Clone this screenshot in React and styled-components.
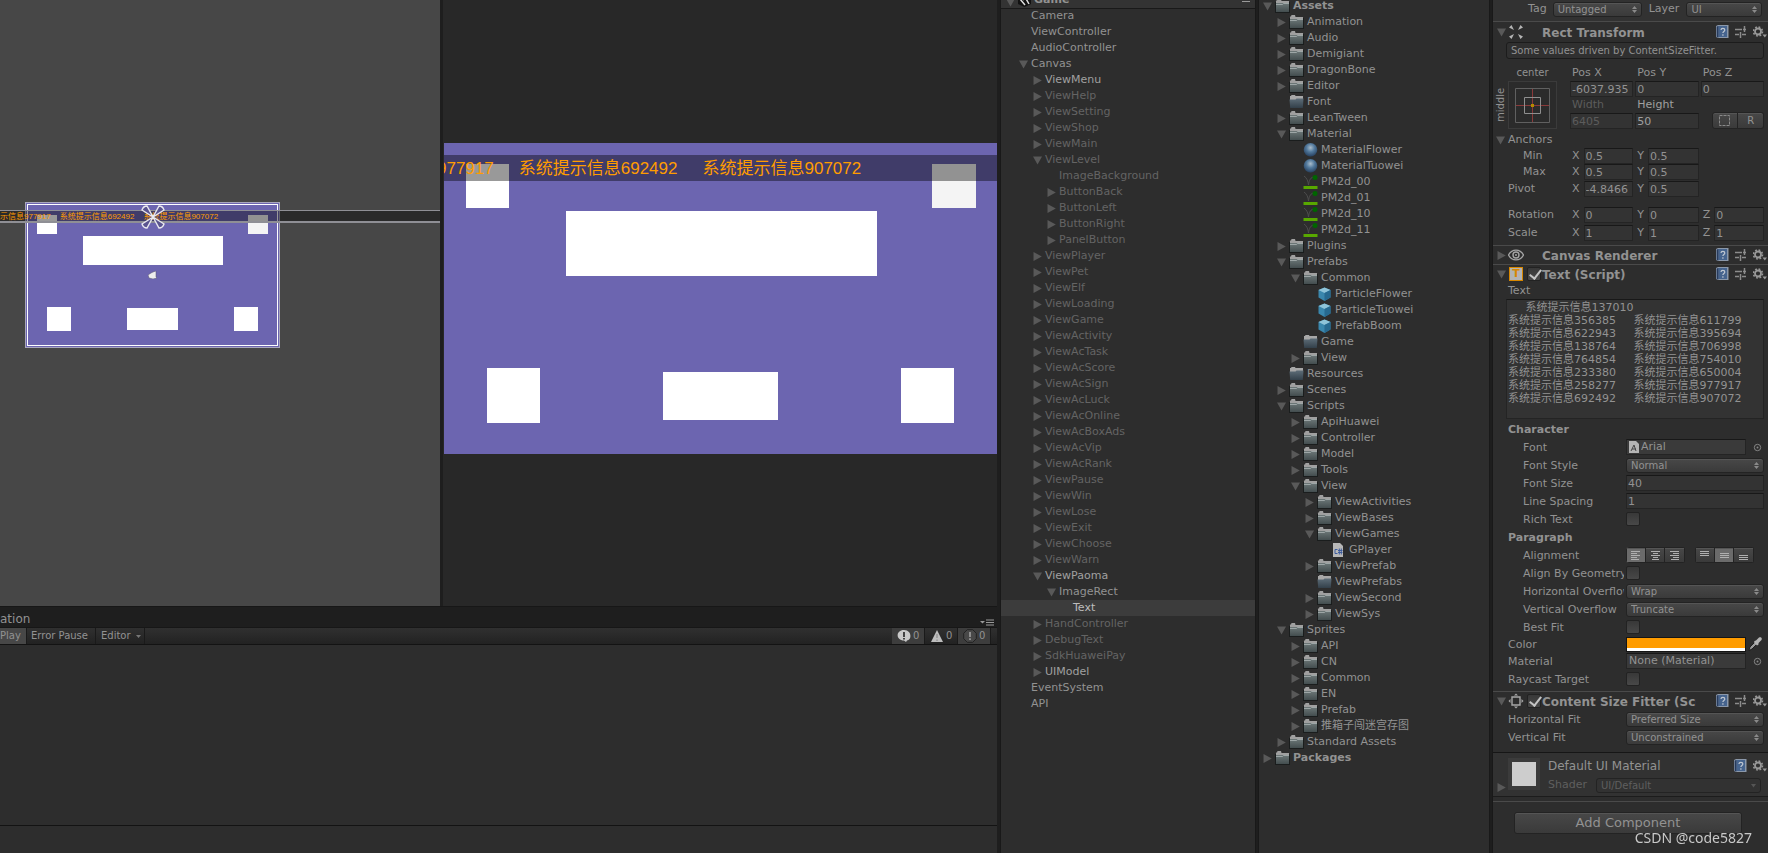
import React from "react";
import styled, { createGlobalStyle, css } from "styled-components";

const GlobalStyle = createGlobalStyle`
  * {
    box-sizing: border-box;
  }
  body {
    margin: 0;
    overflow: hidden;
    background: #202020;
    color: #929292;
    font-family: "DejaVu Sans", "Noto Sans CJK SC", sans-serif;
    font-size: 11px;
    line-height: 16px;
  }
  input, select, textarea, button {
    margin: 0;
    color: inherit;
    font: inherit;
  }
  svg {
    display: block;
    flex: none;
  }
`;

//Data
// [depth, name, arrow, state]
const hierarchy = [
  [0, "Camera"],
  [0, "ViewController"],
  [0, "AudioController"],
  [0, "Canvas", "open"],
  [1, "ViewMenu", "closed", "bright"],
  [1, "ViewHelp", "closed", "off"],
  [1, "ViewSetting", "closed", "off"],
  [1, "ViewShop", "closed", "off"],
  [1, "ViewMain", "closed", "off"],
  [1, "ViewLevel", "open", "off"],
  [2, "ImageBackground", "", "off"],
  [2, "ButtonBack", "closed", "off"],
  [2, "ButtonLeft", "closed", "off"],
  [2, "ButtonRight", "closed", "off"],
  [2, "PanelButton", "closed", "off"],
  [1, "ViewPlayer", "closed", "off"],
  [1, "ViewPet", "closed", "off"],
  [1, "ViewElf", "closed", "off"],
  [1, "ViewLoading", "closed", "off"],
  [1, "ViewGame", "closed", "off"],
  [1, "ViewActivity", "closed", "off"],
  [1, "ViewAcTask", "closed", "off"],
  [1, "ViewAcScore", "closed", "off"],
  [1, "ViewAcSign", "closed", "off"],
  [1, "ViewAcLuck", "closed", "off"],
  [1, "ViewAcOnline", "closed", "off"],
  [1, "ViewAcBoxAds", "closed", "off"],
  [1, "ViewAcVip", "closed", "off"],
  [1, "ViewAcRank", "closed", "off"],
  [1, "ViewPause", "closed", "off"],
  [1, "ViewWin", "closed", "off"],
  [1, "ViewLose", "closed", "off"],
  [1, "ViewExit", "closed", "off"],
  [1, "ViewChoose", "closed", "off"],
  [1, "ViewWarn", "closed", "off"],
  [1, "ViewPaoma", "open", "bright"],
  [2, "ImageRect", "open"],
  [3, "Text", "", "selected"],
  [1, "HandController", "closed", "off"],
  [1, "DebugText", "closed", "off"],
  [1, "SdkHuaweiPay", "closed", "off"],
  [1, "UIModel", "closed", "bright"],
  [0, "EventSystem"],
  [0, "API"],
];

// [depth, name, arrow, icon]
const project = [
  [0, "Assets", "open", "folder", true],
  [1, "Animation", "closed", "folder"],
  [1, "Audio", "closed", "folder"],
  [1, "Demigiant", "closed", "folder"],
  [1, "DragonBone", "closed", "folder"],
  [1, "Editor", "closed", "folder"],
  [1, "Font", "", "empty"],
  [1, "LeanTween", "closed", "folder"],
  [1, "Material", "open", "folder"],
  [2, "MaterialFlower", "", "material"],
  [2, "MaterialTuowei", "", "material"],
  [2, "PM2d_00", "", "physics"],
  [2, "PM2d_01", "", "physics"],
  [2, "PM2d_10", "", "physics"],
  [2, "PM2d_11", "", "physics"],
  [1, "Plugins", "closed", "folder"],
  [1, "Prefabs", "open", "folder"],
  [2, "Common", "open", "folder"],
  [3, "ParticleFlower", "", "prefab"],
  [3, "ParticleTuowei", "", "prefab"],
  [3, "PrefabBoom", "", "prefab"],
  [2, "Game", "", "empty"],
  [2, "View", "closed", "folder"],
  [1, "Resources", "", "empty"],
  [1, "Scenes", "closed", "folder"],
  [1, "Scripts", "open", "folder"],
  [2, "ApiHuawei", "closed", "folder"],
  [2, "Controller", "closed", "folder"],
  [2, "Model", "closed", "folder"],
  [2, "Tools", "closed", "folder"],
  [2, "View", "open", "folder"],
  [3, "ViewActivities", "closed", "folder"],
  [3, "ViewBases", "closed", "folder"],
  [3, "ViewGames", "open", "folder"],
  [4, "GPlayer", "", "script"],
  [3, "ViewPrefab", "closed", "folder"],
  [3, "ViewPrefabs", "", "empty"],
  [3, "ViewSecond", "closed", "folder"],
  [3, "ViewSys", "closed", "folder"],
  [1, "Sprites", "open", "folder"],
  [2, "API", "closed", "folder"],
  [2, "CN", "closed", "folder"],
  [2, "Common", "closed", "folder"],
  [2, "EN", "closed", "folder"],
  [2, "Prefab", "closed", "folder"],
  [2, "推箱子闯迷宫存图", "closed", "folder"],
  [1, "Standard Assets", "closed", "folder"],
  [0, "Packages", "closed", "folder", true],
];

const messages = [
  ["137010"],
  ["356385", "611799"],
  ["622943", "395694"],
  ["138764", "706998"],
  ["764854", "754010"],
  ["233380", "650004"],
  ["258277", "977917"],
  ["692492", "907072"],
];

const messageText = messages
  .map((row) =>
    row.length === 1
      ? "     系统提示信息" + row[0]
      : row.map((n) => "系统提示信息" + n).join("     ")
  )
  .join("\n");

// x, y, width, height in the game picture
const gameBlocks = [
  [22, 21, 43, 44, "#fff"],
  [488, 21, 44, 44, "#f4f4f4"],
  [122, 68, 311, 65, "#fff"],
  [43, 225, 53, 55, "#fff"],
  [219, 229, 115, 48, "#fff"],
  [457, 225, 53, 55, "#fff"],
];

const sceneBlocks = [
  [37, 215, 20, 19, "#fff"],
  [248, 215, 20, 19, "#f4f4f4"],
  [83, 236, 140, 29, "#fff"],
  [47, 307, 24, 24, "#fff"],
  [127, 308, 51, 22, "#fff"],
  [234, 307, 24, 24, "#fff"],
];

//Icons
const Arrow = ({ dir }) => (
  <svg width="9" height="9" viewBox="0 0 9 9" fill="#595959">
    {dir === "open" && <path d="M0 .5h9L4.500 8.500z" />}
    {dir === "closed" && <path d="M.5 0v9L8.800 4.500z" />}
  </svg>
);

const FileIcon = ({ kind }) => (
  <svg width="15" height="15" viewBox="0 0 15 15">
    <defs>
      <linearGradient id="folderFill" x1="0" y1="0" x2="0" y2="1">
        <stop offset="0" stopColor="#6d7878" />
        <stop offset="1" stopColor="#434d4f" />
      </linearGradient>
      <linearGradient id="emptyFill" x1="0" y1="0" x2="0" y2="1">
        <stop offset="0" stopColor="#5d6d78" />
        <stop offset="1" stopColor="#33404a" />
      </linearGradient>
      <radialGradient id="ballFill" cx=".5" cy=".35" r=".6">
        <stop offset="0" stopColor="#a9bccb" />
        <stop offset=".5" stopColor="#52799c" />
        <stop offset="1" stopColor="#2c4766" />
      </radialGradient>
    </defs>
    {kind === "folder" && (
      <>
        <path d="M0 3h15v11H0z" fill="#1a1d1d" />
        <path d="M1 1.500h1L2.500 0H6l.5 2H14v3H1z" fill="#a0a0a0" />
        <path d="M1 4h13v9H1z" fill="url(#folderFill)" />
        <path d="M1 5.500h6.500l1-1H14" fill="none" stroke="#a4adad" strokeWidth=".9" />
      </>
    )}
    {kind === "empty" && (
      <>
        <path d="M1 1h1l.5-1H6l.5 1H14v5H1z" fill="#a8a8a8" />
        <path d="M.5 4.500h6l1-1h7l-.7 9.500H1.200z" fill="url(#emptyFill)" />
      </>
    )}
    {kind === "material" && <circle cx="7.500" cy="6.800" r="6.800" fill="url(#ballFill)" />}
    {kind === "physics" && (
      <>
        <path d="M1 1c3 2 4 5 4.500 9C6 5 8 2 11 2" fill="none" stroke="#4d4d4d" />
        <circle cx="12" cy="2.500" r="2.500" fill="#006400" />
        <path d="M.5 11h14v3H.5z" fill="#58a800" />
      </>
    )}
    {kind === "prefab" && (
      <>
        <path d="M7.500 .5l6 2.500v7.500l-6 3.500-6-3.500V3z" fill="#3a87ad" />
        <path d="M7.500 .5l6 2.500-6 3-6-3z" fill="#8fc4d9" />
        <path d="M7.500 6l6-3v7.500l-6 3.500z" fill="#27698f" />
      </>
    )}
    {kind === "script" && (
      <>
        <path d="M2 0h7l3 3v11H2z" fill="#b7b7b7" />
        <path d="M6.500 6.500H4v4h2.500M8.300 5.500v6M10.300 5.500v6M7 7.500h4.500M7 9.500h4.500" fill="none" stroke="#3d5c9e" />
      </>
    )}
  </svg>
);

const BookIcon = () => (
  <svg width="13" height="14" viewBox="0 0 13 14">
    <path d="M0 1l2-1h10.500v13H2L0 12z" fill="#8b98aa" />
    <path d="M2.500 1h8.500v11H2.500z" fill="#46648e" />
    <path d="M.7 1.500L2.500 1v11.500L.7 12z" fill="#263b5e" />
    <path d="M5 5c0-2.200 3.800-2.200 3.800 0 0 1.500-1.900 1.400-1.900 3M6.900 9.200v1.500" fill="none" stroke="#c0c8d2" strokeWidth="1.200" />
  </svg>
);

const SlidersIcon = () => (
  <svg width="12" height="12" viewBox="0 0 12 12" fill="none" stroke="#8c8c8c" strokeWidth="1.500">
    <path d="M0 3.500h7M9.500 0v6M8 3.500h3M0 8.500h4M7 8.500h4M5.500 6v6" />
  </svg>
);

const GearIcon = () => (
  <svg width="14" height="12" viewBox="0 0 14 12">
    <circle cx="5" cy="5.500" r="3" fill="none" stroke="#989898" strokeWidth="1.800" />
    <circle cx="5" cy="5.500" r="4.500" fill="none" stroke="#989898" strokeWidth="1.600" strokeDasharray="1.770 1.770" />
    <path d="M9.500 8.500H14l-2.200 3z" fill="#989898" />
  </svg>
);

const RectIcon = () => (
  <svg width="16" height="16" viewBox="0 0 16 16" fill="#b5b5b5">
    <path d="M1 3.500L3.500 1 6 6zM15 3.500L12.500 1 10 6zM1 12.500L3.500 15 6 10zM15 12.500L12.500 15 10 10z" />
  </svg>
);

const EyeIcon = () => (
  <svg width="16" height="16" viewBox="0 0 16 16" fill="none" stroke="#a5a5a5" strokeWidth="1.400">
    <path d="M.5 8C4 1.500 12 1.500 15.500 8 12 14.500 4 14.500 .5 8z" />
    <circle cx="8" cy="8" r="3" />
    <circle cx="8" cy="8" r="1" fill="#a5a5a5" stroke="none" />
  </svg>
);

const FitterIcon = () => (
  <svg width="16" height="16" viewBox="0 0 16 16">
    <path d="M4 4h8v8H4z" fill="none" stroke="#a8a8a8" strokeWidth="1.400" />
    <path d="M6 2.500L8 .5l2 2zM6 13.500l2 2 2-2zM2.500 6l-2 2 2 2zM13.500 6l2 2-2 2z" fill="#a8a8a8" />
  </svg>
);

const PickerIcon = () => (
  <svg width="9" height="9" viewBox="0 0 9 9">
    <circle cx="4.500" cy="4.500" r="3.200" fill="none" stroke="#858585" />
    <circle cx="4.500" cy="4.500" r="1" fill="#858585" />
  </svg>
);

const DropperIcon = () => (
  <svg width="14" height="14" viewBox="0 0 14 14">
    <path d="M1 13.500l1-3.500 5-5 2 2-5 5z" fill="#9a9a9a" stroke="#111" strokeWidth=".8" />
    <path d="M6.500 4l1.500-.5L11 .6c2-1 3.500.5 2.500 2.400L10.500 6v1.500L9 8.500 6 5.300z" fill="#b5b5b5" />
  </svg>
);

const AlignIcon = ({ lines }) => (
  <svg width="11" height="11" viewBox="0 0 11 11" stroke="#b0b0b0">
    {lines.map(([x1, x2, y]) => (
      <path key={y} d={`M${x1} ${y}H${x2}`} />
    ))}
  </svg>
);

const MenuIcon = () => (
  <svg width="14" height="7" viewBox="0 0 14 7">
    <path d="M0 2h5L2.500 4.500z" fill="#999" />
    <path d="M6 1h8M6 3.500h8M6 6h8" stroke="#999" />
  </svg>
);

//Inspector pieces
const ComponentHeader = ({ name, icon, open, toggle, tall }) => (
  <Header $tall={tall}>
    <Arrow dir={open ? "open" : "closed"} />
    <HeaderIcon>{icon}</HeaderIcon>
    <HeaderToggle>
      {toggle && <Check type="checkbox" defaultChecked aria-label={"Enable " + name} />}
    </HeaderToggle>
    <HeaderName>{name}</HeaderName>
    <HeaderTools>
      <BookIcon />
      <SlidersIcon />
      <GearIcon />
    </HeaderTools>
  </Header>
);

const Field = ({ id, label, indent, short, children }) => (
  <FieldRow $short={short}>
    <FieldLabel htmlFor={id} $indent={indent}>
      {label}
    </FieldLabel>
    <FieldValue>{children}</FieldValue>
  </FieldRow>
);

const Popup = ({ id, value, dim, small, label }) => (
  <PopupBox $dim={dim}>
    <Select id={id} defaultValue={value} disabled={dim} aria-label={label}>
      <option>{value}</option>
    </Select>
    <svg width="5" height="7" viewBox="0 0 5 7" fill={dim ? "#555" : "#8a8a8a"}>
      {small ? <path d="M0 2h5L2.500 5.500z" /> : <path d="M0 3L2.500 0 5 3zM0 4l2.500 3L5 4z" />}
    </svg>
  </PopupBox>
);

const Vector = ({ label, values, indent, tall, gap }) => (
  <VectorRow $tall={tall} $gap={gap}>
    <VectorLabel $indent={indent}>{label}</VectorLabel>
    <Triple>
      {values.map((v, i) => (
        <Axis key={i}>
          {"XYZ"[i]}
          <TextInput defaultValue={v} />
        </Axis>
      ))}
    </Triple>
  </VectorRow>
);

export default function App() {
  return (
    <>
      <GlobalStyle />
      <Editor>
        <LeftSide>
          <Views>
            <SceneView>
              <SceneCanvas />
              {sceneBlocks.map(([x, y, w, h, color]) => (
                <Block key={x + "-" + y} $x={x} $y={y} $w={w} $h={h} $color={color} />
              ))}
              <SceneStrip>
                <span>系统提示信息977917</span>
                <span>系统提示信息692492</span>
                <span>系统提示信息907072</span>
              </SceneStrip>
              <AnchorGizmo width="24" height="24" viewBox="0 0 24 24">
                <path
                  d="M12 12L1 5c1-3 3-4 5-4zM12 12l11-7c-1-3-3-4-5-4zM12 12L1 19c1 3 3 4 5 4zM12 12l11 7c-1 3-3 4-5 4z"
                  fill="#5b5590"
                  stroke="#e8e8ef"
                  strokeWidth="1.400"
                />
              </AnchorGizmo>
              <SpeakerGizmo width="10" height="8" viewBox="0 0 10 8">
                <path d="M0 4l3-2 2-1 3-1v6l1 1-4 1-4-1z" fill="#eeeeee" stroke="#55506f" strokeWidth=".5" />
              </SpeakerGizmo>
            </SceneView>
            <GameView>
              <GamePicture>
                {gameBlocks.map(([x, y, w, h, color]) => (
                  <Block key={x + "-" + y} $x={x} $y={y} $w={w} $h={h} $color={color} />
                ))}
                <GameStrip>
                  <span>系统提示信息977917</span>
                  <span>系统提示信息692492</span>
                  <span>系统提示信息907072</span>
                </GameStrip>
              </GamePicture>
            </GameView>
          </Views>

          <Console>
            <ConsoleTabs>
              <span>ation</span>
              <MenuIcon />
            </ConsoleTabs>
            <Toolbar>
              <ToolButton $first $on>Play</ToolButton>
              <ToolButton>Error Pause</ToolButton>
              <ToolButton $wide>
                Editor
                <svg width="5" height="3" viewBox="0 0 5 3" fill="#777">
                  <path d="M0 0h5L2.500 3z" />
                </svg>
              </ToolButton>
              <Counters>
                <Counter $on>
                  <svg width="14" height="14" viewBox="0 0 14 14">
                    <path d="M7 1c8 0 8 10 3 10.500L9 13l-2-1.500C-1.500 11.500-1.500 1 7 1z" fill="#c9c9c9" />
                    <path d="M7 3v5M7 9v1.500" stroke="#333" strokeWidth="1.800" />
                  </svg>
                  0
                </Counter>
                <Counter>
                  <svg width="14" height="14" viewBox="0 0 14 14">
                    <path d="M7 1l6 12H1z" fill="#bdbdbd" />
                    <path d="M7 5v4M7 10.500V12" stroke="#8b8b8b" strokeWidth="1.200" />
                  </svg>
                  0
                </Counter>
                <Counter $on>
                  <svg width="14" height="14" viewBox="0 0 14 14">
                    <path d="M4.300 .7h5.400L13.300 4.300v5.400L9.700 13.300H4.300L.7 9.700V4.300z" fill="#484848" stroke="#222" />
                    <path d="M7 3v5M7 9.300V11" stroke="#a5a5a5" strokeWidth="1.500" />
                  </svg>
                  0
                </Counter>
              </Counters>
            </Toolbar>
            <Log />
            <LogDetail />
          </Console>
        </LeftSide>

        <Panel>
          <SceneHeader>
            <Arrow dir="open" />
            <svg width="13" height="13" viewBox="0 0 13 13">
              <path d="M6.500 0L13 4v6l-6.500 3L0 10V4z" fill="#111" />
              <path d="M2 5l5 6M7 3l4 7M3 3l3 3" stroke="#ddd" strokeWidth="1.500" />
            </svg>
            <b>Game</b>
            <svg width="14" height="12" viewBox="0 0 14 12">
              <path d="M6 1h8M6 3.500h8M6 6.500h8" stroke="#999" />
            </svg>
          </SceneHeader>
          <Tree>
            {hierarchy.map(([depth, name, arrow, state]) => (
              <TreeRow key={name} $depth={depth} $start={18} $state={state}>
                <Arrow dir={arrow} />
                <span>{name}</span>
              </TreeRow>
            ))}
          </Tree>
        </Panel>

        <Panel>
          <Tree $scrolled>
            {project.map(([depth, name, arrow, icon, bold], i) => (
              <TreeRow key={i} $depth={depth} $start={4} $bold={bold}>
                <Arrow dir={arrow} />
                <FileIcon kind={icon} />
                <span>{name}</span>
              </TreeRow>
            ))}
          </Tree>
        </Panel>

        <Panel>
          <ObjectHeader>
            <label htmlFor="tag">Tag</label>
            <TagSlot>
              <Popup id="tag" value="Untagged" />
            </TagSlot>
            <label htmlFor="layer">Layer</label>
            <LayerSlot>
              <Popup id="layer" value="UI" />
            </LayerSlot>
          </ObjectHeader>

          <Section $pad={3}>
            <ComponentHeader name="Rect Transform" icon={<RectIcon />} open tall />
            <HelpBox>Some values driven by ContentSizeFitter.</HelpBox>
            <RectArea>
              <Middle>middle</Middle>
              <AnchorColumn>
                <span>center</span>
                <AnchorButton aria-label="Anchor presets">
                  <svg width="35" height="35" viewBox="0 0 35 35" fill="none">
                    <path d="M.5.5h34v34H.5z" stroke="#606060" />
                    <path d="M17.500 1v33M1 17.500h33" stroke="#8a3a3a" />
                    <path d="M9.500 9.500h16v16h-16z" stroke="#8f8f8f" />
                    <path d="M16 16h3v3h-3z" fill="#b58a00" />
                  </svg>
                </AnchorButton>
              </AnchorColumn>
              <RectFields>
                <Stack>Pos X<TextInput defaultValue="-6037.935" /></Stack>
                <Stack>Pos Y<TextInput defaultValue="0" /></Stack>
                <Stack>Pos Z<TextInput defaultValue="0" /></Stack>
                <Stack $dim>Width<TextInput defaultValue="6405" disabled /></Stack>
                <Stack $bright>Height<TextInput defaultValue="50" /></Stack>
                <ModeButtons>
                  <ModeButton aria-label="Blueprint mode">
                    <svg width="11" height="11" viewBox="0 0 11 11" fill="none" stroke="#8a8a8a" strokeDasharray="3 1">
                      <path d="M.5.500h10v10H.5z" />
                    </svg>
                  </ModeButton>
                  <ModeButton>R</ModeButton>
                </ModeButtons>
              </RectFields>
            </RectArea>
            <AnchorsTitle>
              <Arrow dir="open" />
              Anchors
            </AnchorsTitle>
            <Vector label="Min" values={["0.5", "0.5"]} indent />
            <Vector label="Max" values={["0.5", "0.5"]} indent />
            <Vector label="Pivot" values={["-4.8466", "0.5"]} tall />
            <Vector label="Rotation" values={["0", "0", "0"]} tall gap />
            <Vector label="Scale" values={["1", "1", "1"]} tall />
          </Section>

          <Section>
            <ComponentHeader name="Canvas Renderer" icon={<EyeIcon />} />
          </Section>

          <Section $pad={3}>
            <ComponentHeader name="Text (Script)" icon={<TextBadge>T</TextBadge>} open toggle />
            <AreaLabel htmlFor="content">Text</AreaLabel>
            <TextArea id="content" defaultValue={messageText} spellCheck={false} />
            <Group>Character</Group>
            <Field id="font" label="Font" indent>
              <ObjectBox>
                <svg width="10" height="12" viewBox="0 0 10 12">
                  <path d="M0 0h7l3 3v9H0z" fill="#b5b5b5" />
                  <path d="M2 10l3-6 2 6M3 8h4" fill="none" stroke="#444" />
                </svg>
                <ObjectInput id="font" defaultValue="Arial" />
              </ObjectBox>
              <ObjectPick aria-label="Pick font">
                <PickerIcon />
              </ObjectPick>
            </Field>
            <Field id="style" label="Font Style" indent>
              <Popup id="style" value="Normal" />
            </Field>
            <Field id="size" label="Font Size" indent>
              <TextInput id="size" defaultValue="40" />
            </Field>
            <Field id="spacing" label="Line Spacing" indent>
              <TextInput id="spacing" defaultValue="1" />
            </Field>
            <Field id="rich" label="Rich Text" indent>
              <Check id="rich" type="checkbox" />
            </Field>
            <Group>Paragraph</Group>
            <FieldRow>
              <FieldLabel as="span" $indent>Alignment</FieldLabel>
              <FieldValue>
                <ButtonGroup>
                  <AlignButton $on aria-label="Left">
                    <AlignIcon lines={[[1, 10, 1.5], [1, 7, 3.5], [1, 10, 5.5], [1, 7, 7.5], [1, 9, 9.5]]} />
                  </AlignButton>
                  <AlignButton aria-label="Center">
                    <AlignIcon lines={[[1, 10, 1.5], [3, 8, 3.5], [1, 10, 5.5], [3, 8, 7.5], [2, 9, 9.5]]} />
                  </AlignButton>
                  <AlignButton aria-label="Right">
                    <AlignIcon lines={[[1, 10, 1.5], [4, 10, 3.5], [1, 10, 5.5], [4, 10, 7.5], [2, 10, 9.5]]} />
                  </AlignButton>
                </ButtonGroup>
                <ButtonGroup>
                  <AlignButton aria-label="Top">
                    <AlignIcon lines={[[1, 10, 1.5], [1, 10, 3.5], [1, 10, 5.5]]} />
                  </AlignButton>
                  <AlignButton $on aria-label="Middle">
                    <AlignIcon lines={[[1, 10, 3.5], [1, 10, 5.5], [1, 10, 7.5]]} />
                  </AlignButton>
                  <AlignButton aria-label="Bottom">
                    <AlignIcon lines={[[1, 10, 5.5], [1, 10, 7.5], [1, 10, 9.5]]} />
                  </AlignButton>
                </ButtonGroup>
              </FieldValue>
            </FieldRow>
            <Field id="geometry" label="Align By Geometry" indent>
              <Check id="geometry" type="checkbox" />
            </Field>
            <Field id="hover" label="Horizontal Overflow" indent>
              <Popup id="hover" value="Wrap" />
            </Field>
            <Field id="vover" label="Vertical Overflow" indent>
              <Popup id="vover" value="Truncate" />
            </Field>
            <Field id="bestfit" label="Best Fit" indent>
              <Check id="bestfit" type="checkbox" />
            </Field>
            <Field id="color" label="Color" short>
              <Swatch id="color" />
              <ObjectPick aria-label="Pick color">
                <DropperIcon />
              </ObjectPick>
            </Field>
            <Field id="material" label="Material">
              <ObjectBox>
                <ObjectInput id="material" defaultValue="None (Material)" />
              </ObjectBox>
              <ObjectPick aria-label="Pick material">
                <PickerIcon />
              </ObjectPick>
            </Field>
            <Field id="raycast" label="Raycast Target">
              <Check id="raycast" type="checkbox" />
            </Field>
          </Section>

          <Section $pad={6}>
            <ComponentHeader name="Content Size Fitter (Script)" icon={<FitterIcon />} open toggle />
            <Field id="hfit" label="Horizontal Fit">
              <Popup id="hfit" value="Preferred Size" />
            </Field>
            <Field id="vfit" label="Vertical Fit">
              <Popup id="vfit" value="Unconstrained" />
            </Field>
          </Section>

          <MaterialCard>
            <MaterialArrow>
              <Arrow dir="closed" />
            </MaterialArrow>
            <Preview />
            <MaterialInfo>
              <MaterialTitle>
                Default UI Material
                <BookIcon />
                <GearIcon />
              </MaterialTitle>
              <ShaderRow>
                <label htmlFor="shader">Shader</label>
                <Popup id="shader" value="UI/Default" dim small />
              </ShaderRow>
            </MaterialInfo>
          </MaterialCard>

          <Footer>
            <AddButton>Add Component</AddButton>
          </Footer>
        </Panel>
      </Editor>
      <Watermark>CSDN @code5827</Watermark>
    </>
  );
}

//Styles
const Editor = styled.div`
  display: grid;
  grid-template-columns: minmax(0, 1fr) 254px 230px 275px;
  gap: 4px;
  height: 100vh;
  overflow: hidden;
  background: #1e1e1e;
`;

const LeftSide = styled.div`
  display: flex;
  flex-direction: column;
  min-height: 0;
`;

const Views = styled.div`
  display: grid;
  grid-template-columns: 440fr 554fr;
  gap: 3px;
  flex: 1;
  min-height: 0;
`;

const SceneView = styled.div`
  position: relative;
  overflow: hidden;
  background: #474747;
`;

const SceneCanvas = styled.div`
  position: absolute;
  left: 25px;
  top: 202px;
  width: 255px;
  height: 146px;
  background: #6c65b0;
  border: 1px solid #a9a7bd;
  outline: 1px solid #fff;
  outline-offset: -3px;
`;

const Block = styled.div`
  position: absolute;
  left: ${(p) => p.$x}px;
  top: ${(p) => p.$y}px;
  width: ${(p) => p.$w}px;
  height: ${(p) => p.$h}px;
  background: ${(p) => p.$color};
`;

const strip = css`
  position: absolute;
  left: 0;
  right: 0;
  display: flex;
  align-items: center;
  background: rgba(0, 0, 0, 0.4);
  color: #ff9c00;
  font-family: "Liberation Sans", "Noto Sans CJK SC", sans-serif;
  white-space: nowrap;
`;

const SceneStrip = styled.div`
  ${strip}
  top: 210px;
  height: 13px;
  gap: 9px;
  padding-top: 1px;
  border-top: 1px solid #8f8f95;
  border-bottom: 2px solid #8f8f95;
  font-size: 8px;
  line-height: 10px;
  span {
    flex: none;
  }
  span:first-child {
    margin-left: -24px;
  }
`;

const AnchorGizmo = styled.svg`
  position: absolute;
  left: 141px;
  top: 205px;
`;

const SpeakerGizmo = styled.svg`
  position: absolute;
  left: 148px;
  top: 271px;
`;

const GameView = styled.div`
  display: flex;
  align-items: center;
  padding: 0 0 9px 1px;
  background: #282828;
`;

const GamePicture = styled.div`
  position: relative;
  flex: 1;
  aspect-ratio: 16 / 9;
  overflow: hidden;
  background: #6c65b0;
`;

const GameStrip = styled.div`
  ${strip}
  top: 12px;
  height: 26px;
  gap: 25px;
  padding-top: 2px;
  font-size: 17px;
  line-height: 24px;
  span:first-child {
    margin-left: -109px;
  }
`;

const Console = styled.div`
  display: flex;
  flex-direction: column;
  height: 247px;
  border-top: 1px solid #171717;
`;

const ConsoleTabs = styled.div`
  display: flex;
  justify-content: space-between;
  align-items: flex-end;
  height: 20px;
  padding-right: 3px;
  font-size: 12px;
  line-height: 15px;
  svg {
    margin-bottom: 1px;
  }
`;

const Toolbar = styled.div`
  display: flex;
  height: 18px;
  padding-right: 6px;
  background: linear-gradient(#303030, #222);
  border-top: 1px solid #171717;
  border-bottom: 1px solid #131313;
`;

const ToolButton = styled.button`
  display: flex;
  align-items: center;
  gap: 5px;
  width: ${(p) => (p.$first ? "27px" : p.$wide ? "49px" : "69px")};
  padding: 0 0 0 ${(p) => (p.$first ? "0" : p.$wide ? "5px" : "4px")};
  border: 0;
  border-right: 1px solid #1a1a1a;
  background: ${(p) => (p.$on ? "#474747" : "none")};
  font-size: 10px;
  white-space: nowrap;
`;

const Counters = styled.div`
  display: flex;
  margin-left: auto;
`;

const Counter = styled.button`
  display: flex;
  align-items: center;
  gap: 2px;
  width: 33px;
  padding: 0 0 0 5px;
  border: 0;
  border-right: 1px solid #1a1a1a;
  background: ${(p) => (p.$on ? "#3d3d3d" : "none")};
  font-size: 10px;
`;

const Log = styled.div`
  flex: 1;
  background: #2d2d2d;
`;

const LogDetail = styled.div`
  height: 28px;
  background: #2d2d2d;
  border-top: 1px solid #131313;
`;

const Panel = styled.section`
  min-width: 0;
  overflow: hidden;
  background: #2d2d2d;
  box-shadow: 0 0 0 1px #191919;
`;

const SceneHeader = styled.div`
  display: flex;
  align-items: flex-end;
  gap: 3px;
  height: 8px;
  padding: 0 5px 1px;
  overflow: hidden;
  background: #333;
  box-shadow: 0 1px 0 #191919;
  b {
    margin-right: auto;
    line-height: 14px;
  }
`;

const Tree = styled.ul`
  margin: ${(p) => (p.$scrolled ? "-2px" : "0")} 0 0;
  padding: 0;
  list-style: none;
`;

const stateColors = {
  off: "#646464",
  bright: "#a0a0a0",
  selected: "#bdbdbd",
};

const TreeRow = styled.li`
  display: flex;
  align-items: center;
  gap: 3px;
  height: 16px;
  padding-left: ${(p) => p.$start + p.$depth * 14}px;
  background: ${(p) => (p.$state === "selected" ? "#3c3c3c" : "none")};
  color: ${(p) => stateColors[p.$state] || "#929292"};
  font-weight: ${(p) => (p.$bold ? 700 : 400)};
  white-space: nowrap;
`;

const ObjectHeader = styled.div`
  display: flex;
  align-items: center;
  height: 21px;
  padding: 0 6px 3px 35px;
  background: #323232;
`;

const TagSlot = styled.div`
  display: flex;
  flex: 86;
  margin: 0 7px 0 6px;
`;

const LayerSlot = styled.div`
  display: flex;
  flex: 73;
  margin-left: 7px;
`;

const Section = styled.div`
  padding-bottom: ${(p) => p.$pad || 0}px;
  border-top: 1px solid #4a4a4a;
`;

const Header = styled.div`
  display: flex;
  align-items: center;
  height: ${(p) => (p.$tall ? 20 : 18)}px;
  padding: 0 1px 0 4px;
`;

const HeaderIcon = styled.div`
  width: 16px;
  margin-left: 2px;
`;

const HeaderToggle = styled.div`
  width: 13px;
  margin: 0 2px 0 3px;
`;

const HeaderName = styled.div`
  flex: 1;
  margin-right: 20px;
  padding-top: 1px;
  overflow: hidden;
  font-weight: 700;
  font-size: 12px;
  white-space: nowrap;
`;

const HeaderTools = styled.div`
  display: flex;
  align-items: center;
  gap: 6px;
`;

const HelpBox = styled.div`
  height: 17px;
  margin: 0 4px 6px 13px;
  padding-left: 4px;
  border: 1px solid #1c1c1c;
  border-radius: 3px;
  background: #303030;
  font-size: 10px;
  line-height: 15px;
  white-space: nowrap;
`;

const RectArea = styled.div`
  display: flex;
  margin: 0 4px 3px 2px;
`;

const Middle = styled.div`
  width: 12px;
  height: 48px;
  margin-top: 16px;
  font-size: 10px;
  line-height: 12px;
  text-align: center;
  writing-mode: vertical-rl;
  transform: rotate(180deg);
`;

const AnchorColumn = styled.div`
  display: flex;
  flex-direction: column;
  align-items: center;
  width: 49px;
  margin: 0 13px 0 1px;
  font-size: 10px;
`;

const AnchorButton = styled.button`
  display: grid;
  place-items: center;
  width: 49px;
  height: 48px;
  padding: 0;
  border: 1px solid #3b3b3b;
  background: #2b2b2b;
`;

const RectFields = styled.div`
  display: grid;
  grid-template-columns: repeat(3, minmax(0, 1fr));
  column-gap: 2px;
  flex: 1;
`;

const Stack = styled.label`
  display: flex;
  flex-direction: column;
  text-indent: 2px;
  color: ${(p) => (p.$dim ? "#5c5c5c" : p.$bright ? "#a0a0a0" : "inherit")};
  input {
    flex: none;
    text-indent: 0;
  }
`;

const TextInput = styled.input`
  flex: 1;
  width: 100%;
  min-width: 0;
  height: 16px;
  padding: 0 1px;
  border: 1px solid #242424;
  border-top-color: #181818;
  background: #333;
  line-height: 14px;
`;

const raised = css`
  border: 1px solid #232323;
  background: linear-gradient(#484848, #3a3a3a);
  box-shadow: inset 0 1px 0 #555;
`;

const ModeButtons = styled.div`
  display: flex;
  align-self: end;
  height: 17px;
  margin-left: 11px;
`;

const ModeButton = styled.button`
  ${raised}
  display: grid;
  place-items: center;
  flex: 1;
  padding: 0;
  font-size: 10px;
  line-height: 14px;
  &:first-child {
    border-radius: 3px 0 0 3px;
  }
  &:last-child {
    border-left: 0;
    border-radius: 0 3px 3px 0;
  }
`;

const AnchorsTitle = styled.div`
  display: flex;
  align-items: center;
  gap: 3px;
  padding-left: 3px;
`;

const VectorRow = styled.div`
  display: flex;
  align-items: center;
  height: ${(p) => (p.$tall ? 18 : 16)}px;
  margin: ${(p) => (p.$gap ? 8 : 0)}px 4px 0 15px;
`;

const VectorLabel = styled.div`
  width: 62px;
  padding-left: ${(p) => (p.$indent ? 15 : 0)}px;
`;

const Triple = styled.div`
  display: grid;
  grid-template-columns: repeat(3, minmax(0, 1fr));
  gap: 2px;
  flex: 1;
`;

const Axis = styled.label`
  display: flex;
  gap: 4px;
  padding-left: 2px;
`;

const TextBadge = styled.span`
  display: block;
  width: 14px;
  height: 14px;
  margin-left: 1px;
  border: 1px solid #d78700;
  background: #b3b3b3;
  color: #d78700;
  font-weight: 700;
  line-height: 12px;
  text-align: center;
`;

const AreaLabel = styled.label`
  display: block;
  padding-left: 15px;
`;

const TextArea = styled.textarea`
  display: block;
  width: calc(100% - 17px);
  height: 120px;
  margin: 0 4px 1px 13px;
  padding: 1px;
  border: 1px solid #242424;
  border-top-color: #181818;
  background: #333;
  outline: 0;
  line-height: 13px;
  overflow: hidden;
  resize: none;
  white-space: pre;
`;

const Group = styled.div`
  height: 18px;
  padding: 1px 0 0 15px;
  font-weight: 700;
  line-height: 18px;
`;

const FieldRow = styled.div`
  display: flex;
  align-items: center;
  height: ${(p) => (p.$short ? 16 : 18)}px;
  padding: 0 4px 0 15px;
`;

const FieldLabel = styled.label`
  flex: none;
  width: 116px;
  margin-right: 2px;
  padding: 1px 0 0 ${(p) => (p.$indent ? 15 : 0)}px;
  overflow: hidden;
  white-space: nowrap;
`;

const FieldValue = styled.div`
  display: flex;
  align-items: center;
  flex: 1;
  min-width: 0;
`;

const PopupBox = styled.div`
  ${raised}
  display: flex;
  align-items: center;
  flex: 1;
  height: 15px;
  padding-right: 4px;
  border-radius: 3px;
  ${(p) =>
    p.$dim &&
    css`
      background: #323232;
      box-shadow: none;
      color: #5f5f5f;
    `}
`;

const Select = styled.select`
  flex: 1;
  min-width: 0;
  height: 13px;
  padding: 0 0 0 4px;
  border: 0;
  appearance: none;
  background: none;
  font-size: 10px;
  line-height: 13px;
  opacity: 1;
`;

const Check = styled.input`
  display: block;
  width: 14px;
  height: 14px;
  border: 1px solid #222;
  border-radius: 2px;
  appearance: none;
  background: linear-gradient(#383838, #484848);
  &:checked::after {
    content: "";
    display: block;
    width: 5px;
    height: 10px;
    margin: -1px 0 0 4px;
    border: solid #c4c4c4;
    border-width: 0 2px 2px 0;
    transform: rotate(38deg);
  }
`;

const ButtonGroup = styled.div`
  display: flex;
  margin-right: 10px;
  border-radius: 3px;
  overflow: hidden;
`;

const AlignButton = styled.button`
  ${raised}
  display: grid;
  place-items: center;
  width: 20px;
  height: 16px;
  padding: 0;
  & + & {
    border-left: 0;
  }
  ${(p) => p.$on && "background: #6b6b6b;"}
`;

const ObjectBox = styled.div`
  display: flex;
  align-items: center;
  width: 120px;
  height: 16px;
  padding-left: 2px;
  border: 1px solid #242424;
  border-top-color: #181818;
  background: #3a3a3a;
`;

const ObjectInput = styled.input`
  flex: 1;
  min-width: 0;
  padding: 0;
  border: 0;
  background: none;
  line-height: 14px;
  svg + & {
    margin-left: 2px;
  }
`;

const ObjectPick = styled.button`
  display: grid;
  place-items: center;
  flex: 1;
  padding: 0;
  border: 0;
  background: none;
  ${ObjectBox} + & {
    padding-left: 5px;
  }
`;

const Swatch = styled.button`
  width: 120px;
  height: 15px;
  border: 1px solid #151515;
  background: linear-gradient(#ff9c00 10px, #fff 10px);
`;

const MaterialCard = styled.div`
  display: flex;
  height: 45px;
  padding: 5px 7px 0 4px;
  border-top: 1px solid #161616;
  border-bottom: 1px solid #1c1c1c;
  background: #323232;
`;

const MaterialArrow = styled.div`
  align-self: flex-end;
  width: 11px;
  padding-bottom: 4px;
`;

const Preview = styled.div`
  width: 32px;
  height: 32px;
  margin-right: 8px;
  border: 4px solid #3b3b3b;
  background: #cdcdcd;
`;

const MaterialInfo = styled.div`
  flex: 1;
`;

const MaterialTitle = styled.div`
  display: flex;
  align-items: center;
  gap: 6px;
  margin: 0 -6px 4px 0;
  font-size: 12px;
  svg:first-of-type {
    margin-left: auto;
  }
`;

const ShaderRow = styled.div`
  display: flex;
  align-items: center;
  gap: 9px;
  height: 14px;
  color: #5f5f5f;
`;

const Footer = styled.div`
  margin-top: 4px;
  padding: 10px 26px 20px 21px;
  border-top: 1px solid #4a4a4a;
`;

const AddButton = styled.button`
  ${raised}
  width: 100%;
  height: 22px;
  padding: 0;
  border-radius: 3px;
  font-size: 13px;
`;

const Watermark = styled.div`
  position: fixed;
  right: 16px;
  bottom: 5px;
  color: #c8c8c8;
  font-family: "Noto Sans", sans-serif;
  font-size: 14px;
  line-height: 20px;
`;
